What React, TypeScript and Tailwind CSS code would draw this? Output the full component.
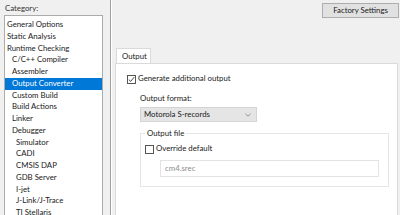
const categories: { label: string; level: number; selected?: boolean }[] = [
  { label: 'General Options', level: 0 },
  { label: 'Static Analysis', level: 0 },
  { label: 'Runtime Checking', level: 0 },
  { label: 'C/C++ Compiler', level: 1 },
  { label: 'Assembler', level: 1 },
  { label: 'Output Converter', level: 1, selected: true },
  { label: 'Custom Build', level: 1 },
  { label: 'Build Actions', level: 1 },
  { label: 'Linker', level: 1 },
  { label: 'Debugger', level: 1 },
  { label: 'Simulator', level: 2 },
  { label: 'CADI', level: 2 },
  { label: 'CMSIS DAP', level: 2 },
  { label: 'GDB Server', level: 2 },
  { label: 'I-jet', level: 2 },
  { label: 'J-Link/J-Trace', level: 2 },
  { label: 'TI Stellaris', level: 2 },
]

const indent = ['pl-[2px]', 'pl-[7px]', 'pl-[11px]']

function CheckBox({ checked }: { checked?: boolean }) {
  return (
    <span className="w-[9px] h-[9px] border border-[#555] bg-white flex items-center justify-center shrink-0">
      {checked && (
        <svg width="7" height="7" viewBox="0 0 7 7">
          <path d="M0.8 3.6 L2.7 5.4 L6.2 1.2" fill="none" stroke="#333" strokeWidth="0.9" />
        </svg>
      )}
    </span>
  )
}

export default function App() {
  return (
    <div
      className="w-[400px] h-[215px] bg-[#f0f0f0] flex overflow-hidden text-[#1a1a1a] text-[7.8px]"
      style={{ fontFamily: 'Lato, "Noto Sans", sans-serif' }}
    >
      {/* Category list */}
      <div className="w-[104px] shrink-0 pl-[4px] pt-[1px]">
        <div className="h-[14px] leading-[14px] pl-[1px] text-[#333]">Category:</div>
        <div className="w-[99px] h-[220px] bg-white border border-[#acacac] pt-[3px]">
          {categories.map((c) => (
            <div
              key={c.label}
              className={`h-[11.75px] leading-[11.75px] whitespace-nowrap ${indent[c.level]} ${
                c.selected ? 'bg-[#0078d7] text-white' : ''
              }`}
            >
              {c.label}
            </div>
          ))}
        </div>
      </div>

      {/* Splitter */}
      <div className="w-[6px] shrink-0" />
      <div className="w-[1px] shrink-0 bg-[#a0a0a0]" />
      <div className="w-[1px] shrink-0 bg-white" />

      {/* Settings pane */}
      <div className="flex-1 flex flex-col pl-[3px] pr-[2px]">
        <div className="flex justify-end pt-[3px] -mr-[1px]">
          <button className="w-[77px] h-[15px] bg-[#e1e1e1] border border-[#adadad] leading-[13px] text-[#1a1a1a]">
            Factory Settings
          </button>
        </div>

        <div className="mt-[30px] flex">
          <div className="ml-[1px] w-[35px] h-[15px] bg-white border border-b-0 border-[#dadada] leading-[15px] pl-[5px]">
            Output
          </div>
        </div>

        <div className="flex-1 bg-white border border-[#dadada] border-b-0 pt-[9px] pl-[11px]">
          <div className="flex items-center gap-[2px] h-[12px]">
            <CheckBox checked />
            <span>Generate additional output</span>
          </div>

          <div className="pl-[13px] mt-[8px]">
            <div className="h-[11px] leading-[11px]">Output format:</div>
            <div className="mt-[3px] w-[117px] h-[15px] bg-[#e5e5e5] border border-[#d4d4d4] flex items-center justify-between pl-[3px] pr-[5px]">
              <span>Motorola S-records</span>
              <svg width="6" height="4" viewBox="0 0 6 4">
                <path d="M0.5 0.8 L3 3.2 L5.5 0.8" fill="none" stroke="#8a8a8a" strokeWidth="0.9" />
              </svg>
            </div>

            <div className="relative mt-[11px] w-[249px] h-[54px] border border-[#e6e6e6]">
              <span className="absolute -top-[7px] left-[4px] bg-white px-[2px] leading-[12px]">Output file</span>
              <div className="pt-[9px] pl-[4px]">
                <div className="flex items-center gap-[2px] h-[12px]">
                  <CheckBox />
                  <span>Override default</span>
                </div>
                <div className="mt-[5px] ml-[15px] w-[219px] h-[17px] border border-[#e3e3e3] pl-[4px] leading-[15px] text-[#8c8c8c]">
                  cm4.srec
                </div>
              </div>
            </div>
          </div>
        </div>
      </div>
    </div>
  )
}
